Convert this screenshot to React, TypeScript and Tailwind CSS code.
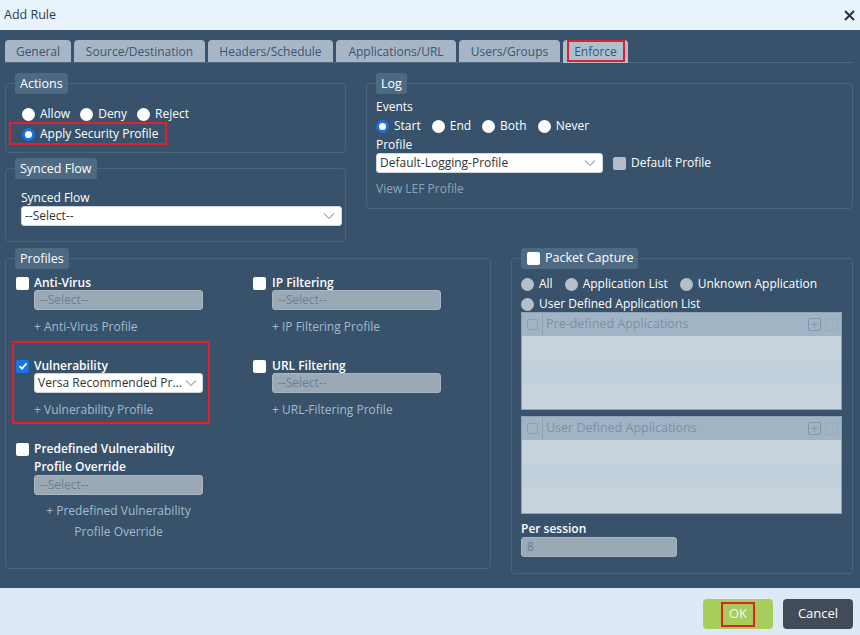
import React from 'react';

type RadioProps = { label: string; checked?: boolean; disabled?: boolean };

function Radio({ label, checked = false, disabled = false }: RadioProps) {
  return (
    <span className="flex items-center gap-[5px]">
      {checked ? (
        <span className="w-[13px] h-[13px] rounded-full border-[3px] border-[#1d6fe2] bg-white shrink-0" />
      ) : (
        <span className={disabled ? 'w-[13px] h-[13px] rounded-full bg-[#b4bfc9] shrink-0' : 'w-[13px] h-[13px] rounded-full bg-white shrink-0'} />
      )}
      <span>{label}</span>
    </span>
  );
}

function Checkbox({ checked = false }: { checked?: boolean }) {
  if (checked) {
    return (
      <span className="block w-[13px] h-[13px] rounded-[2px] bg-[#1a73e8] shrink-0 flex items-center justify-center">
        <svg width="10" height="10" viewBox="0 0 10 10">
          <polyline points="1.5,5.2 4,7.6 8.6,2.4" fill="none" stroke="white" strokeWidth="1.8" />
        </svg>
      </span>
    );
  }
  return <span className="block w-[13px] h-[13px] rounded-[2px] bg-white shrink-0" />;
}

function Chevron() {
  return (
    <svg width="12" height="8" viewBox="0 0 12 8" className="shrink-0">
      <polyline points="1,1.5 6,6.5 11,1.5" fill="none" stroke="#a7adb4" strokeWidth="1.1" />
    </svg>
  );
}

function Legend({ children }: { children: React.ReactNode }) {
  return (
    <legend className="ml-[9px] h-[21px] px-[5px] leading-[21px] rounded-[3px] bg-[#4e6a83] text-white text-[12.5px]">
      {children}
    </legend>
  );
}

function DisabledSelect({ value = '--Select--', className }: { value?: string; className: string }) {
  return (
    <div className={`h-[20px] rounded-[3px] bg-[#9ba9b6] border border-[#a9b5c1] px-[5px] leading-[18px] text-[12px] text-[#6c7f92] ${className}`}>
      {value}
    </div>
  );
}

function AppTable({ title }: { title: string }) {
  return (
    <div className="w-[321px] h-[98px] flex flex-col border border-[#8fa3b5]">
      <div className="h-[23px] bg-[#a1b4c5] flex items-center shrink-0">
        <div className="w-[21px] h-full flex items-center justify-center border-r border-[#8ea2b5]">
          <span className="w-[11px] h-[11px] rounded-[2px] border border-[#8ba0b4]" />
        </div>
        <span className="ml-[3px] flex-1 text-[12.5px] text-[#7a90a5]">{title}</span>
        <span className="w-[13px] h-[13px] rounded-[2px] border border-[#7f95aa] flex items-center justify-center text-[#7f95aa] text-[13px] leading-none">+</span>
        <span className="ml-[4px] mr-[3px] w-[13px] h-[13px] rounded-[2px] border border-[#98abbd] flex items-center justify-center text-[#98abbd] text-[12px] leading-none">−</span>
      </div>
      <div className="flex-1 bg-[#c7d4de]" />
      <div className="flex-1 bg-[#c2d0db]" />
      <div className="flex-1 bg-[#c7d4de]" />
    </div>
  );
}

export default function App() {
  return (
    <div className="w-[860px] h-[635px] flex flex-col font-['Open_Sans','Liberation_Sans',sans-serif] text-[12px] text-white overflow-hidden">
      {/* Title bar */}
      <div className="h-[30px] shrink-0 bg-[#e9f3fc] flex items-center justify-between pl-[4px] pr-[5px]">
        <span className="text-[12.5px] text-[#2d3c4c]">Add Rule</span>
        <svg width="11" height="11" viewBox="0 0 11 11">
          <path d="M1 1 L10 10 M10 1 L1 10" stroke="#26323f" strokeWidth="2" />
        </svg>
      </div>

      {/* Body */}
      <div className="flex-1 bg-[#37526a] pl-[5px] pr-[7px] pt-[10px]">
        {/* Tabs */}
        <div className="flex gap-[3px] border-b border-[#4e6981] h-[23px] text-[12px] text-[#3c5570]">
          <div className="w-[66px] h-[22px] pt-[1px] rounded-t-[4px] bg-[#a6b6c6] flex items-center justify-center">General</div>
          <div className="w-[131px] h-[22px] pt-[1px] rounded-t-[4px] bg-[#a6b6c6] flex items-center justify-center">Source/Destination</div>
          <div className="w-[125px] h-[22px] pt-[1px] rounded-t-[4px] bg-[#a6b6c6] flex items-center justify-center">Headers/Schedule</div>
          <div className="w-[120px] h-[22px] pt-[1px] rounded-t-[4px] bg-[#a6b6c6] flex items-center justify-center">Applications/URL</div>
          <div className="w-[101px] h-[22px] pt-[1px] rounded-t-[4px] bg-[#a6b6c6] flex items-center justify-center">Users/Groups</div>
          <div className="w-[65px] h-[23px] rounded-t-[4px] bg-[#aebfd0] flex items-start justify-center">
            <span className="w-[58px] h-[22px] pt-[1px] border-2 border-[#e3202a] flex items-center justify-center">Enforce</span>
          </div>
        </div>

        {/* Top row */}
        <div className="flex gap-[20px] mt-[10px]">
          <div className="w-[341px] flex flex-col gap-[5px]">
            <fieldset className="h-[80px] border border-[#4a667e] rounded-[4px]">
              <Legend>Actions</Legend>
              <div className="pl-[16px] pt-[10px]">
                <div className="h-[20px] flex items-center gap-[10px]">
                  <Radio label="Allow" />
                  <Radio label="Deny" />
                  <Radio label="Reject" />
                </div>
                <div className="h-[20px] flex items-center">
                  <div className="relative">
                    <Radio label="Apply Security Profile" checked />
                    <div className="absolute left-[-13px] top-[-3px] w-[158px] h-[23px] border-2 border-[#e3202a]" />
                  </div>
                </div>
              </div>
            </fieldset>

            <fieldset className="h-[84px] border border-[#4a667e] rounded-[4px]">
              <Legend>Synced Flow</Legend>
              <div className="pl-[15px] pr-[3px] pt-[11px]">
                <div className="h-[16px] leading-[16px]">Synced Flow</div>
                <div className="h-[20px] rounded-[3px] bg-white border border-[#cdd4db] flex items-center justify-between pl-[3px] pr-[6px]">
                  <span className="text-[12px] text-[#333]">--Select--</span>
                  <Chevron />
                </div>
              </div>
            </fieldset>
          </div>

          <fieldset className="w-[487px] h-[136px] border border-[#4a667e] rounded-[4px]">
            <Legend>Log</Legend>
            <div className="pl-[9px] pt-[5px]">
              <div className="h-[16px] leading-[16px]">Events</div>
              <div className="mt-[2px] h-[18px] flex items-center gap-[11px]">
                <Radio label="Start" checked />
                <Radio label="End" />
                <Radio label="Both" />
                <Radio label="Never" />
              </div>
              <div className="mt-[2px] h-[16px] leading-[16px]">Profile</div>
              <div className="flex items-center gap-[10px]">
                <div className="w-[227px] h-[20px] rounded-[3px] bg-white border border-[#cdd4db] flex items-center justify-between pl-[3px] pr-[6px]">
                  <span className="text-[12px] text-[#333]">Default-Logging-Profile</span>
                  <Chevron />
                </div>
                <div className="flex items-center gap-[5px]">
                  <span className="w-[13px] h-[13px] rounded-[2px] bg-[#b3bdc7]" />
                  <span>Default Profile</span>
                </div>
              </div>
              <div className="mt-[8px] h-[16px] leading-[16px] text-[#8da5bb]">View LEF Profile</div>
            </div>
          </fieldset>
        </div>

        {/* Bottom row */}
        <div className="flex gap-[20px] mt-[6px]">
          <fieldset className="w-[486px] h-[321px] border border-[#4a667e] rounded-[4px]">
            <Legend>Profiles</Legend>
            <div className="flex pl-[10px] pt-[6px]">
              {/* left column */}
              <div className="w-[237px] flex flex-col">
                <div className="flex items-center gap-[5px] h-[16px]">
                  <Checkbox />
                  <span className="font-[560]">Anti-Virus</span>
                </div>
                <DisabledSelect className="ml-[18px] mt-[-1px] w-[169px]" />
                <div className="ml-[18px] mt-[9px] h-[16px] leading-[16px] text-[#a3bace]">+ Anti-Virus Profile</div>

                <div className="relative mt-[23px]">
                  <div className="flex items-center gap-[5px] h-[16px]">
                    <Checkbox checked />
                    <span className="font-[560]">Vulnerability</span>
                  </div>
                  <div className="ml-[18px] mt-[-1px] w-[169px] h-[20px] rounded-[3px] bg-white border border-[#cdd4db] flex items-center justify-between pl-[3px] pr-[5px]">
                    <span className="text-[12px] text-[#333]">Versa Recommended Pr...</span>
                    <Chevron />
                  </div>
                  <div className="ml-[18px] mt-[9px] h-[16px] leading-[16px] text-[#a3bace]">+ Vulnerability Profile</div>
                  <div className="absolute left-[-4px] top-[-17px] w-[198px] h-[83px] border-2 border-[#e3202a]" />
                </div>

                <div className="mt-[22px] flex items-start gap-[5px]">
                  <span className="flex pt-[3px]">
                    <Checkbox />
                  </span>
                  <span className="font-[560] leading-[18px]">
                    Predefined Vulnerability
                    <br />
                    Profile Override
                  </span>
                </div>
                <DisabledSelect className="ml-[18px] mt-[-1px] w-[169px]" />
                <div className="ml-[18px] mt-[5px] w-[169px] text-center leading-[21px] text-[#a3bace]">
                  + Predefined Vulnerability
                  <br />
                  Profile Override
                </div>
              </div>

              {/* right column */}
              <div className="w-[200px] flex flex-col">
                <div className="flex items-center gap-[6px] h-[16px]">
                  <Checkbox />
                  <span className="font-[560]">IP Filtering</span>
                </div>
                <DisabledSelect className="ml-[19px] mt-[-1px] w-[169px]" />
                <div className="ml-[19px] mt-[9px] h-[16px] leading-[16px] text-[#a3bace]">+ IP Filtering Profile</div>

                <div className="mt-[23px] flex items-center gap-[6px] h-[16px]">
                  <Checkbox />
                  <span className="font-[560]">URL Filtering</span>
                </div>
                <DisabledSelect className="ml-[19px] mt-[-1px] w-[169px]" />
                <div className="ml-[19px] mt-[9px] h-[16px] leading-[16px] text-[#a3bace]">+ URL-Filtering Profile</div>
              </div>
            </div>
          </fieldset>

          <fieldset className="w-[342px] h-[326px] border border-[#4a667e] rounded-[4px]">
            <legend className="ml-[9px] h-[21px] pl-[6px] pr-[5px] rounded-[3px] bg-[#4e6a83] text-white text-[12.5px]">
              <span className="flex items-center gap-[5px] h-[21px]">
                <Checkbox />
                Packet Capture
              </span>
            </legend>
            <div className="pl-[9px] pt-[6px]">
              <div className="h-[18px] flex items-center gap-[12px]">
                <Radio label="All" disabled />
                <Radio label="Application List" disabled />
                <Radio label="Unknown Application" disabled />
              </div>
              <div className="mt-[2px] h-[18px] flex items-center">
                <Radio label="User Defined Application List" disabled />
              </div>
              <div className="mt-[-1px]">
                <AppTable title="Pre-defined Applications" />
              </div>
              <div className="mt-[6px]">
                <AppTable title="User Defined Applications" />
              </div>
              <div className="mt-[7px] h-[16px] leading-[16px] font-[560]">Per session</div>
              <DisabledSelect value="8" className="w-[156px]" />
            </div>
          </fieldset>
        </div>
      </div>

      {/* Footer */}
      <div className="h-[47px] shrink-0 bg-[#dde9f4] flex justify-end items-start gap-[10px] pr-[7px] pt-[11px]">
        <div className="w-[70px] h-[30px] rounded-[4px] bg-[#a7cd5b] flex items-center justify-center">
          <span className="w-[34px] h-[25px] border-2 border-[#e3202a] flex items-center justify-center text-[13px] text-[#f7f9f2]">OK</span>
        </div>
        <div className="w-[70px] h-[30px] rounded-[4px] bg-[#424c59] flex items-center justify-center text-[13px] text-white">
          Cancel
        </div>
      </div>
    </div>
  );
}
